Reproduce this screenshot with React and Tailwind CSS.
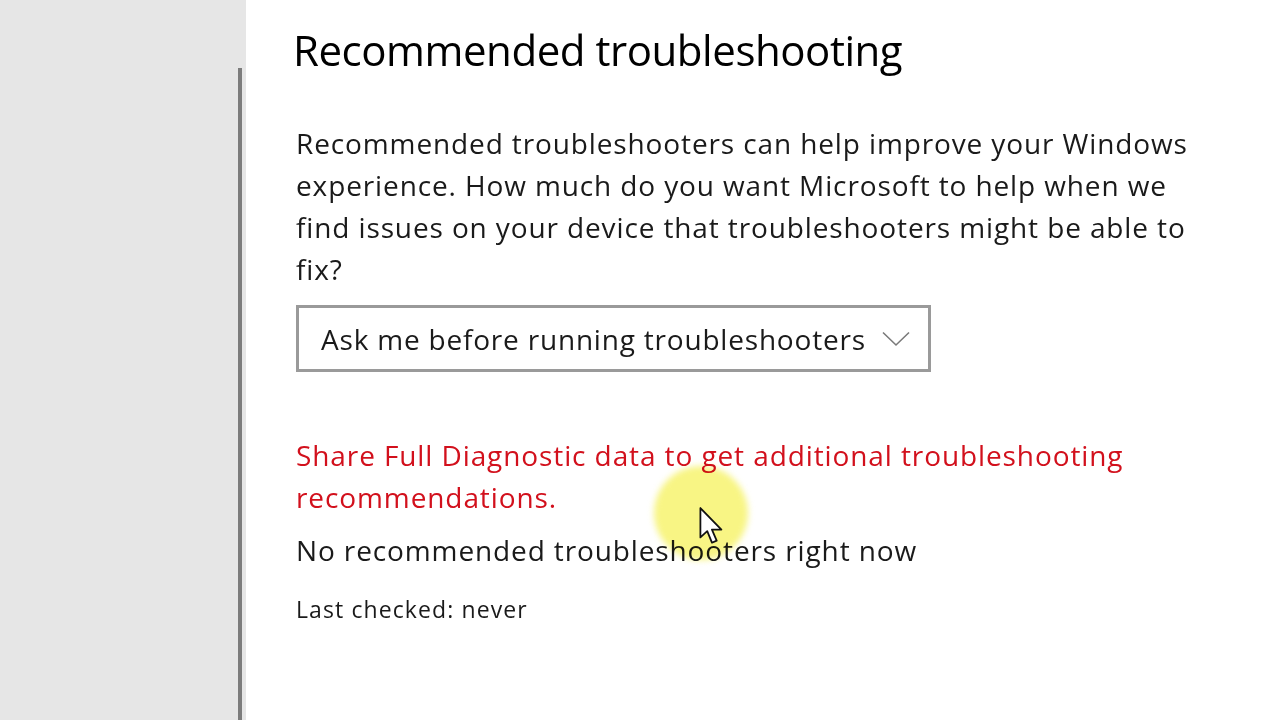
import React from "react";

const font = { fontFamily: '"Open Sans", "Noto Sans", sans-serif' };

function Chevron() {
  return (
    <svg width="28" height="16" viewBox="0 0 28 16" fill="none" className="shrink-0">
      <path d="M1 1.5 L14 14 L27 1.5" stroke="#7a7a7a" strokeWidth="1.6" />
    </svg>
  );
}

function Cursor() {
  return (
    <div className="absolute left-[654px] top-[466px] w-[94px] h-[94px] pointer-events-none">
      <div className="absolute inset-0 rounded-full bg-[#f8f584] mix-blend-multiply blur-[3px]" />
      <svg width="28" height="42" viewBox="0 0 26 40" className="absolute left-[45px] top-[41px]">
        <path
          d="M1 1 L1 29 L7.5 23 L12 34 L16.5 32 L12 21.5 L21 21.5 Z"
          fill="#ffffff"
          stroke="#111111"
          strokeWidth="1.7"
          strokeLinejoin="round"
        />
      </svg>
    </div>
  );
}

export default function App() {
  return (
    <div className="relative flex w-[1280px] h-[720px] bg-white overflow-hidden text-[#1a1a1a]" style={font}>
      {/* left nav pane, only its edge is in view */}
      <aside className="w-[246px] h-full bg-[#e6e6e6] flex">
        <div className="ml-[238px] mt-[68px] w-[4px] h-full bg-[#7c7c7c]" />
      </aside>

      <main className="flex-1 pl-[50px] pt-[24px]">
        <h1 className="text-[42px] leading-[52px] -ml-[3px] tracking-[-0.45px] font-normal text-black">
          Recommended troubleshooting
        </h1>

        <p className="mt-[46px] w-[905px] text-[28px] leading-[42px] tracking-[0.88px]">
          Recommended troubleshooters can help improve your Windows experience. How much do you want Microsoft to help when we find issues on your device that troubleshooters might be able to fix?
        </p>

        <div className="mt-[15px] w-[635px] h-[67px] border-[3px] border-[#9a9a9a] flex items-center justify-between pl-[22px] pr-[18px]">
          <span className="text-[28px] tracking-[0.8px]">Ask me before running troubleshooters</span>
          <Chevron />
        </div>

        <p className="mt-[62px] w-[880px] text-[28px] leading-[42px] tracking-[0.9px] text-[#d2101c]">
          Share Full Diagnostic data to get additional troubleshooting recommendations.
        </p>

        <p className="mt-[11px] text-[28px] leading-[42px] tracking-[0.88px]">
          No recommended troubleshooters right now
        </p>

        <p className="mt-[22px] text-[23px] leading-[32px] tracking-[1.1px]">Last checked: never</p>
      </main>

      <Cursor />
    </div>
  );
}
